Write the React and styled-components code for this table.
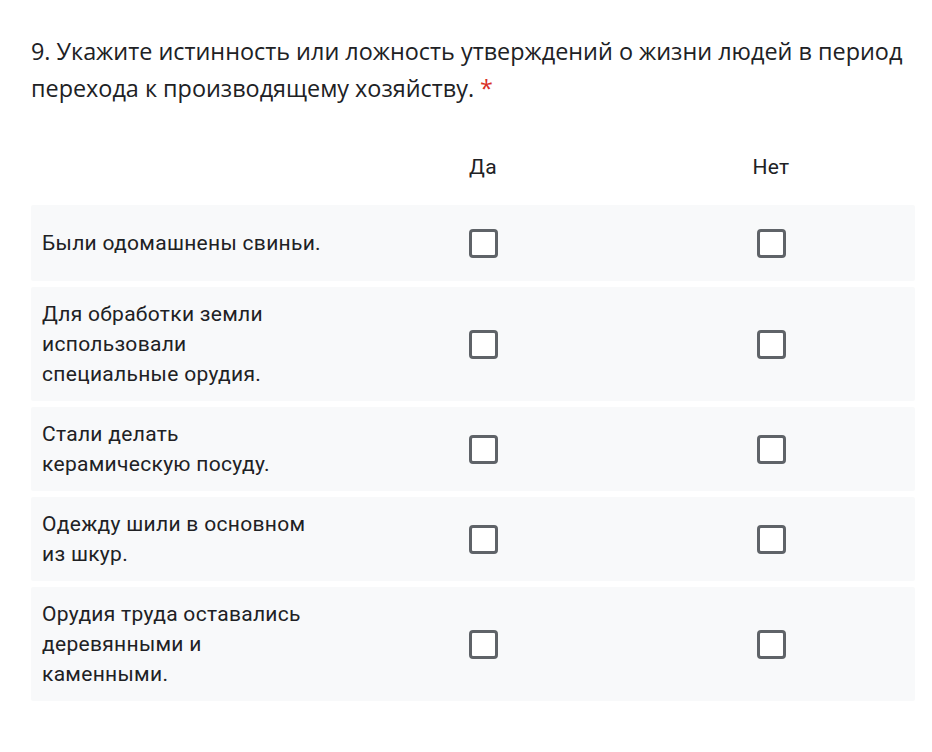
import React from 'react';
import styled, {createGlobalStyle} from 'styled-components';

const GlobalStyle = createGlobalStyle`
    body {
        margin: 0;
        background: #fff;
        font-family: Roboto, "Liberation Sans", sans-serif;
        color: #202124;
    }
`;

const Page = styled.div`
    padding: 33px 17px 40px 31px;
`;

const Title = styled.div`
    font-family: "Open Sans", "Noto Sans", sans-serif;
    font-size: 23.4px;
    line-height: 37px;
    color: #202124;
    max-width: 884px;
`;

const Star = styled.span`
    color: #d93025;
    margin-left: 6px;
`;

const Grid = styled.div`
    margin-top: 30px;
    display: flex;
    flex-direction: column;
    gap: 6px;
    width: 884px;
`;

const Row = styled.div`
    display: grid;
    grid-template-columns: 308px 288px 288px;
    align-items: center;
    min-height: ${p => p.header ? '60px' : '76px'};
    margin-bottom: ${p => p.header ? '2px' : '0'};
    background: ${p => p.header ? 'transparent' : '#f8f9fa'};
    border-radius: 2px;
`;

const Label = styled.div`
    padding: 12px 11px;
    font-size: 21px;
    line-height: 30px;
    letter-spacing: 0.3px;
    max-width: 283px;
`;

const Head = styled.div`
    text-align: center;
    font-size: 21px;
    line-height: 30px;
    letter-spacing: 0.3px;
`;

const Cell = styled.div`
    display: flex;
    justify-content: center;
    align-items: center;
`;

const Box = styled.div`
    width: 23px;
    height: 23px;
    border: 3px solid #5f6368;
    border-radius: 4px;
    background: #fff;
`;

const items = [
    'Были одомашнены свиньи.',
    'Для обработки земли использовали специальные орудия.',
    'Стали делать керамическую посуду.',
    'Одежду шили в основном из шкур.',
    'Орудия труда оставались деревянными и каменными.',
];

export default function App() {
    return (
        <Page>
            <GlobalStyle />
            <Title>
                <span>9. Укажите истинность или ложность утверждений о жизни людей в период перехода к производящему хозяйству.</span>
                <Star>*</Star>
            </Title>
            <Grid>
                <Row header>
                    <div />
                    <Head>Да</Head>
                    <Head>Нет</Head>
                </Row>
                {items.map(text => (
                    <Row key={text}>
                        <Label>{text}</Label>
                        <Cell><Box /></Cell>
                        <Cell><Box /></Cell>
                    </Row>
                ))}
            </Grid>
        </Page>
    );
}
